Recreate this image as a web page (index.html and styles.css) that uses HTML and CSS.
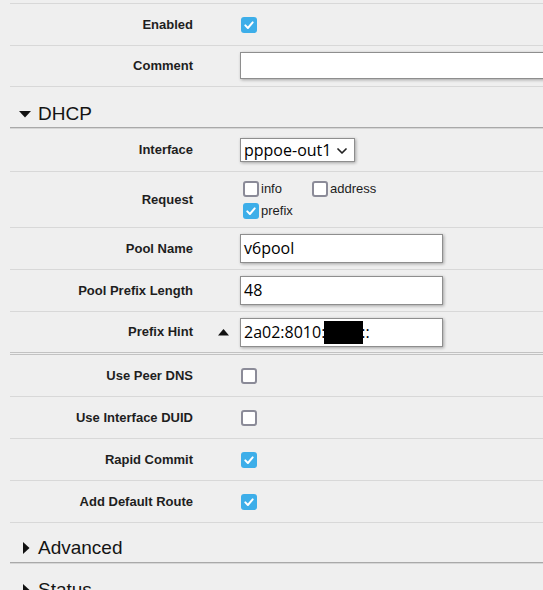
FILE: index.html
```html
<!DOCTYPE html>
<html>
<head>
<meta charset="utf-8">
<title>DHCPv6 Client</title>
<link rel="stylesheet" href="styles.css">
</head>
<body>
<div class="form">
  <div class="top-edge"></div>

  <div class="row h41">
    <div class="label">Enabled</div><div class="gutter"></div>
    <div class="value"><span class="cb checked"><svg viewBox="0 0 16 16" width="16" height="16"><path d="M4.3 8.4l2.6 2.6 4.8-5.6" fill="none" stroke="#fff" stroke-width="2" stroke-linecap="round" stroke-linejoin="round"/></svg></span></div>
  </div>

  <div class="row h40">
    <div class="label">Comment</div><div class="gutter"></div>
    <div class="value"><div class="field comment"></div></div>
  </div>

  <div class="section open">
    <svg class="tri-down" width="12" height="7" viewBox="0 0 12 7"><polygon points="0,0 12,0 6,6.5" fill="#111"/></svg>
    <span>DHCP</span>
  </div>

  <div class="row h43">
    <div class="label">Interface</div><div class="gutter"></div>
    <div class="value"><div class="select"><span>pppoe-out1</span><svg width="10" height="6" viewBox="0 0 10 6"><path d="M1 1l4 4 4-4" fill="none" stroke="#222" stroke-width="1.7" stroke-linecap="round" stroke-linejoin="round"/></svg></div></div>
  </div>

  <div class="row h55">
    <div class="label">Request</div><div class="gutter"></div>
    <div class="value checks">
      <div class="check-line">
        <label class="opt"><span class="cb"></span>info</label>
        <label class="opt"><span class="cb"></span>address</label>
      </div>
      <div class="check-line">
        <label class="opt"><span class="cb checked"><svg viewBox="0 0 16 16" width="16" height="16"><path d="M4.3 8.4l2.6 2.6 4.8-5.6" fill="none" stroke="#fff" stroke-width="2" stroke-linecap="round" stroke-linejoin="round"/></svg></span>prefix</label>
      </div>
    </div>
  </div>

  <div class="row h41">
    <div class="label">Pool Name</div><div class="gutter"></div>
    <div class="value"><div class="field">v6pool</div></div>
  </div>

  <div class="row h41">
    <div class="label">Pool Prefix Length</div><div class="gutter"></div>
    <div class="value"><div class="field">48</div></div>
  </div>

  <div class="row h40 group-end">
    <div class="label">Prefix Hint</div>
    <div class="gutter"><svg class="tri-up" width="11" height="7" viewBox="0 0 11 7"><polygon points="0,6.5 11,6.5 5.5,0" fill="#111"/></svg></div>
    <div class="value"><div class="field">2a02:8010:<span class="redact"></span>::</div></div>
  </div>

  <div class="row h41">
    <div class="label">Use Peer DNS</div><div class="gutter"></div>
    <div class="value"><span class="cb"></span></div>
  </div>

  <div class="row h41">
    <div class="label">Use Interface DUID</div><div class="gutter"></div>
    <div class="value"><span class="cb"></span></div>
  </div>

  <div class="row h41">
    <div class="label">Rapid Commit</div><div class="gutter"></div>
    <div class="value"><span class="cb checked"><svg viewBox="0 0 16 16" width="16" height="16"><path d="M4.3 8.4l2.6 2.6 4.8-5.6" fill="none" stroke="#fff" stroke-width="2" stroke-linecap="round" stroke-linejoin="round"/></svg></span></div>
  </div>

  <div class="row h41">
    <div class="label">Add Default Route</div><div class="gutter"></div>
    <div class="value"><span class="cb checked"><svg viewBox="0 0 16 16" width="16" height="16"><path d="M4.3 8.4l2.6 2.6 4.8-5.6" fill="none" stroke="#fff" stroke-width="2" stroke-linecap="round" stroke-linejoin="round"/></svg></span></div>
  </div>

  <div class="section closed short">
    <svg class="tri-right" width="7" height="12" viewBox="0 0 7 12"><polygon points="0,0 6.5,6 0,12" fill="#111"/></svg>
    <span>Advanced</span>
  </div>

  <div class="section closed">
    <svg class="tri-right" width="7" height="12" viewBox="0 0 7 12"><polygon points="0,0 6.5,6 0,12" fill="#111"/></svg>
    <span>Status</span>
  </div>
</div>
</body>
</html>
```

FILE: styles.css
```css
html, body {
  margin: 0;
  padding: 0;
  overflow: hidden;
  background: #efefef;
}

body {
  font-family: "Liberation Sans", Arial, sans-serif;
  color: #1c1c1c;
}

.form {
  margin-left: 10px;
}

.top-edge {
  height: 3px;
  border-bottom: 1px solid #d8d8d8;
}

.row {
  display: grid;
  grid-template-columns: 183px 47px 1fr;
  align-items: center;
  border-bottom: 1px solid #d8d8d8;
}

.h40 { height: 40px; }
.h41 { height: 41px; }
.h43 { height: 43px; }
.h55 { height: 55px; }

.row.group-end {
  border-bottom: 3px double #c2c2c2;
}

.label {
  text-align: right;
  font-weight: bold;
  font-size: 13px;
  color: #1e1e1e;
  margin-top: -1px;
}

.gutter {
  display: flex;
  align-items: center;
  height: 100%;
  padding-left: 25px;
}

.tri-up {
  display: block;
  margin-top: 1px;
}

.value {
  display: flex;
  align-items: center;
}

.cb {
  box-sizing: border-box;
  width: 16px;
  height: 16px;
  margin-left: 1px;
  border: 2px solid #8b8b98;
  border-radius: 3px;
  background: #fff;
  display: inline-block;
  flex: none;
}

.cb svg {
  display: block;
}

.cb.checked {
  border: none;
  background: #3daee9;
}

.field {
  box-sizing: border-box;
  width: 203px;
  height: 29px;
  background: #fff;
  border: 1px solid #8e8e8e;
  box-shadow: 1px 1px 3px rgba(0, 0, 0, 0.32);
  padding-left: 3px;
  font-family: "Open Sans", "Noto Sans", sans-serif;
  font-size: 16px;
  line-height: 27px;
  color: #000;
  white-space: nowrap;
}

.field.comment {
  width: 330px;
  height: 27px;
  margin-top: -2px;
}

.redact {
  display: inline-block;
  width: 39px;
  height: 23px;
  background: #000;
  vertical-align: middle;
  margin: -2px -2px 0 -1px;
  position: relative;
}

.select {
  box-sizing: border-box;
  width: 115px;
  height: 24px;
  background: #fff;
  border: 1px solid #8e8e8e;
  box-shadow: 1px 1px 3px rgba(0, 0, 0, 0.32);
  padding: 0 7px 0 3px;
  display: flex;
  align-items: center;
  justify-content: space-between;
  font-family: "Open Sans", "Noto Sans", sans-serif;
  font-size: 16px;
  color: #000;
}

.select svg {
  margin-top: 2px;
}

.checks {
  flex-direction: column;
  align-items: flex-start;
  padding-left: 2px;
}

.check-line {
  display: flex;
  align-items: center;
  height: 22px;
}

.opt {
  display: flex;
  align-items: center;
  gap: 2px;
  width: 69px;
  font-size: 13px;
  color: #1c1c1c;
}

.opt .cb {
  margin-top: 1px;
}

.section {
  box-sizing: border-box;
  height: 41px;
  padding-top: 16px;
  display: flex;
  align-items: center;
  align-content: flex-start;
  font-size: 19px;
  line-height: 22px;
  color: #141414;
  border-bottom: 1px solid #a9a9a9;
  box-shadow: 0 1px 0 #d6d6d6;
  flex-wrap: wrap;
}

.section.short {
  height: 40px;
  padding-top: 14px;
}

.section span {
  height: 22px;
}

.tri-down {
  margin-left: 9px;
  margin-right: 7px;
  margin-top: 0;
}

.tri-right {
  margin-left: 13px;
  margin-right: 8px;
  margin-top: -1px;
}
```
